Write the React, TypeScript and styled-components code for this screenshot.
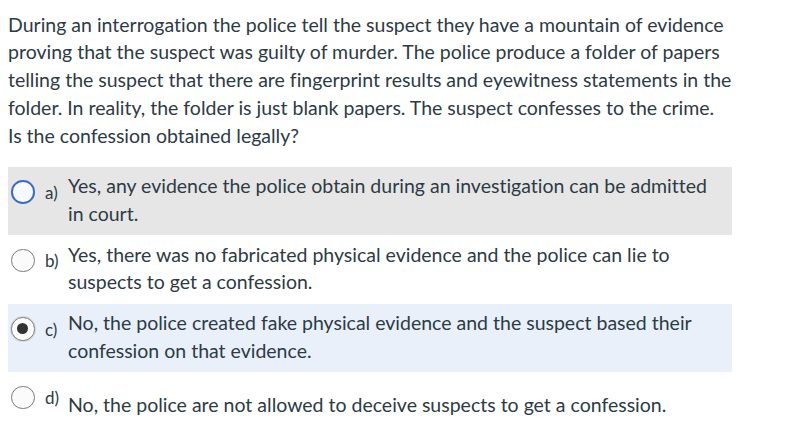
import React from 'react';
import styled, { createGlobalStyle } from 'styled-components';

const GlobalStyle = createGlobalStyle`
  html, body {
    margin: 0;
    padding: 0;
    background: #ffffff;
  }
  body {
    font-family: Lato, "Open Sans", sans-serif;
    color: #2d3b45;
    font-variant-ligatures: none;
  }
`;

type Tone = 'plain' | 'hover' | 'selected';

const Page = styled.div`
  width: 724px;
  padding: 10.5px 8px 0 8px;
`;

const Question = styled.p`
  margin: 0 0 17.5px 0;
  font-size: 19.5px;
  line-height: 27.75px;
`;

const Answers = styled.div`
  display: flex;
  flex-direction: column;
`;

const Option = styled.label<{ $tone: Tone }>`
  display: flex;
  align-items: center;
  min-height: 56px;
  padding: 5px 12px 7.5px 3px;
  background: ${p =>
    p.$tone === 'hover' ? '#e6e6e6' : p.$tone === 'selected' ? '#e9f0fa' : 'transparent'};
`;

const Radio = styled.span<{ $focus?: boolean; $checked?: boolean }>`
  flex: none;
  position: relative;
  box-sizing: border-box;
  width: 23.5px;
  height: 23.5px;
  margin-bottom: 16px;
  border-radius: 50%;
  border: ${p => (p.$focus ? '2px solid #3b6cc5' : '1px solid #7a7a7a')};
  background: ${p => (p.$focus ? '#f7f9fe' : '#fbfbfc')};
  box-shadow: ${p => (p.$checked ? 'inset 0 0 0 2px #ffffff, 0 0 0 1px #d6dbe3' : 'none')};

  &::after {
    content: '';
    display: ${p => (p.$checked ? 'block' : 'none')};
    position: absolute;
    left: 50%;
    top: 50%;
    width: 11px;
    height: 11px;
    margin: -5.5px 0 0 -5.5px;
    border-radius: 50%;
    background: #333333;
  }
`;

const Letter = styled.span`
  flex: none;
  width: 23px;
  margin: 0 0 14px 10.5px;
  font-size: 17px;
  line-height: 24px;
`;

const AnswerText = styled.span`
  flex: 1;
  font-size: 19.5px;
  line-height: 27.75px;
`;

const answers: { letter: string; text: string; tone: Tone; focus?: boolean; checked?: boolean }[] = [
  {
    letter: 'a)',
    text: 'Yes, any evidence the police obtain during an investigation can be admitted in court.',
    tone: 'hover',
    focus: true,
  },
  {
    letter: 'b)',
    text: 'Yes, there was no fabricated physical evidence and the police can lie to suspects to get a confession.',
    tone: 'plain',
  },
  {
    letter: 'c)',
    text: 'No, the police created fake physical evidence and the suspect based their confession on that evidence.',
    tone: 'selected',
    checked: true,
  },
  {
    letter: 'd)',
    text: 'No, the police are not allowed to deceive suspects to get a confession.',
    tone: 'plain',
  },
];

export default function App() {
  return (
    <>
      <GlobalStyle />
      <Page>
        <Question>
          During an interrogation the police tell the suspect they have a mountain of evidence
          proving that the suspect was guilty of murder. The police produce a folder of papers
          telling the suspect that there are fingerprint results and eyewitness statements in the
          folder. In reality, the folder is just blank papers. The suspect confesses to the crime.
          Is the confession obtained legally?
        </Question>
        <Answers>
          {answers.map(a => (
            <Option key={a.letter} $tone={a.tone}>
              <Radio $focus={a.focus} $checked={a.checked} />
              <Letter>{a.letter}</Letter>
              <AnswerText>{a.text}</AnswerText>
            </Option>
          ))}
        </Answers>
      </Page>
    </>
  );
}
